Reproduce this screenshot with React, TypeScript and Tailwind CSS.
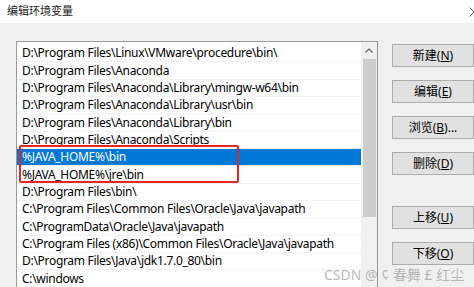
import { ReactNode } from 'react';

const rows = [
  'D:\\Program Files\\Linux\\VMware\\procedure\\bin\\',
  'D:\\Program Files\\Anaconda',
  'D:\\Program Files\\Anaconda\\Library\\mingw-w64\\bin',
  'D:\\Program Files\\Anaconda\\Library\\usr\\bin',
  'D:\\Program Files\\Anaconda\\Library\\bin',
  'D:\\Program Files\\Anaconda\\Scripts',
  '%JAVA_HOME%\\bin',
  '%JAVA_HOME%\\jre\\bin',
  'D:\\Program Files\\bin\\',
  'C:\\Program Files\\Common Files\\Oracle\\Java\\javapath',
  'C:\\ProgramData\\Oracle\\Java\\javapath',
  'C:\\Program Files (x86)\\Common Files\\Oracle\\Java\\javapath',
  'D:\\Program Files\\Java\\jdk1.7.0_80\\bin',
  'C:\\windows',
];

function Btn({ label, k, className }: { label: string; k: string; className?: string }) {
  return (
    <div
      className={
        'h-[23px] w-[82px] border border-[#adadad] bg-[#e1e1e1] flex items-center justify-center text-[12px] text-black ' +
        (className ?? '')
      }
    >
      {label}(<span className="underline">{k}</span>){label === '浏览' ? '...' : ''}
    </div>
  );
}

function Row({ text, selected }: { text: string; selected?: boolean }): ReactNode {
  return (
    <div
      className={
        'h-[17.35px] flex items-center pl-[5px] whitespace-nowrap text-[12px] tracking-[-0.3px] leading-none border-b border-[#f2f2f2] ' +
        (selected ? 'bg-[#0078d7] text-white border-[#0078d7]' : 'text-black')
      }
    >
      {text}
    </div>
  );
}

export default function App() {
  return (
    <div className="relative w-[474px] h-[287px] overflow-hidden bg-[#f0f0f0] font-['Microsoft_YaHei_UI','Noto_Sans','Noto_Sans_CJK_SC',sans-serif]">
      <div className="h-[23px] bg-white flex items-center pl-[7px] text-[11px] text-[#222]">
        编辑环境变量
        <svg className="ml-auto mr-[-5px]" width="10" height="10" viewBox="0 0 10 10">
          <path d="M0.5 0.5 L9.5 9.5 M9.5 0.5 L0.5 9.5" stroke="#555" strokeWidth="1" />
        </svg>
      </div>

      <div className="flex pl-4 pt-[18px]">
        <div className="w-[365px] h-[260px] border border-[#9a9a9a] bg-white flex">
          <div className="flex-1 pt-[3px] overflow-hidden">
            {rows.map((r, i) => (
              <Row key={i} text={r} selected={i === 6} />
            ))}
          </div>
          <div className="w-[16px] bg-[#f0f0f0] flex flex-col items-center">
            <div className="h-[17px] flex items-center justify-center">
              <svg width="8" height="5" viewBox="0 0 8 5">
                <path d="M0.5 4.5 L4 1 L7.5 4.5" fill="none" stroke="#606060" strokeWidth="1.2" />
              </svg>
            </div>
            <div className="w-[13px] h-[158px] bg-[#cdcdcd]" />
          </div>
        </div>

        <div className="ml-[14px] pt-[3px] flex flex-col">
          <Btn label="新建" k="N" />
          <Btn label="编辑" k="E" className="mt-[13px]" />
          <Btn label="浏览" k="B" className="mt-[13px]" />
          <Btn label="删除" k="D" className="mt-[13px]" />
          <Btn label="上移" k="U" className="mt-[31px]" />
          <Btn label="下移" k="O" className="mt-[13px]" />
        </div>
      </div>

      <div className="absolute left-[19px] top-[145px] w-[220px] h-[38px] border-2 border-[#e52626] rounded-[2px]" />

      <div className="absolute left-[324px] top-[264px] text-[14px] text-[#a8a8a8]/80 whitespace-nowrap font-['Noto_Sans','Noto_Sans_CJK_SC',sans-serif]">
        CSDN @ ¢ 春舞 £ 红尘
      </div>
    </div>
  );
}
